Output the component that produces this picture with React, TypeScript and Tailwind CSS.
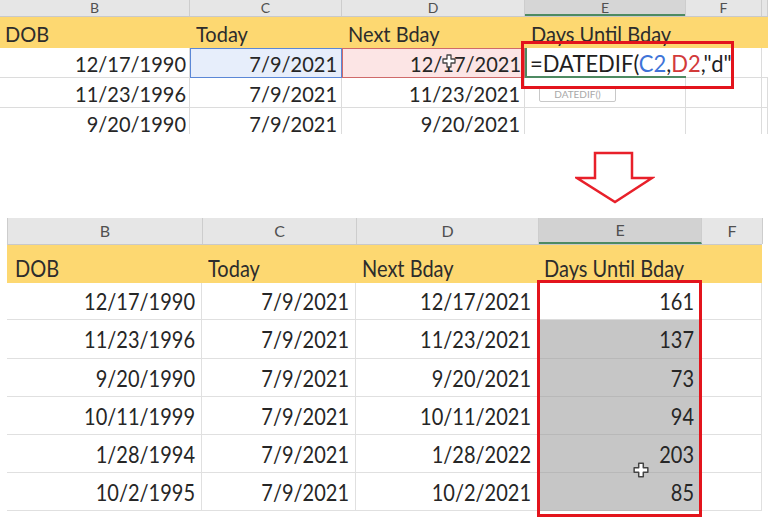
import React from "react";

const topW = ["w-[190px]", "w-[152px]", "w-[183px]", "w-[161px]", "w-[76px]", "w-[6px]"];
const botW = ["w-[195px]", "w-[154px]", "w-[182px]", "w-[163px]", "w-[61px]"];

function Cross({ size }: { size: number }) {
  return (
    <svg width={size} height={size} viewBox="0 0 14 14">
      <path
        d="M5 1h4v4h4v4h-4v4h-4v-4h-4v-4h4z"
        fill="#ffffff"
        stroke="#444"
        strokeWidth="1.3"
        strokeLinejoin="round"
      />
    </svg>
  );
}

function TopSection() {
  const letters = ["B", "C", "D", "E", "F", ""];
  const headers = ["DOB", "Today", "Next Bday", "Days Until Bday", "", ""];
  const rows = [
    ["11/23/1996", "7/9/2021", "11/23/2021"],
    ["9/20/1990", "7/9/2021", "9/20/2021"],
  ];
  return (
    <div className="relative h-[134px] overflow-hidden">
      <div className="flex h-[17px] bg-[#e6e6e6] border-b border-[#c9c9c9]">
        {letters.map((l, i) => (
          <div
            key={i}
            className={`${topW[i]} shrink-0 relative flex items-center justify-center border-r border-[#cdcdcd] text-[14px] leading-[14px] text-[#505050] ${
              i === 3 ? "bg-[#d6d6d6] text-[#2f6e45]" : ""
            }`}
          >
            {l}
            {i === 3 && <div className="absolute left-0 right-0 bottom-0 h-[2px] bg-[#4d8a62]" />}
          </div>
        ))}
      </div>
      <div className="flex h-[31px] bg-[#fdd871]">
        {headers.map((h, i) => (
          <div
            key={i}
            className={`${topW[i]} shrink-0 flex items-end ${i === 0 ? "pl-[5px]" : "pl-[6px]"} pb-[2px] text-[20px] leading-none text-[#2c2c2c] whitespace-nowrap`}
          >
            <span className="pb-[3px] scale-y-[1.08]">{h}</span>
          </div>
        ))}
      </div>
      {/* row 2 */}
      <div className="flex h-[30px]">
        <div className={`${topW[0]} shrink-0 flex items-center justify-end pr-[3px] border-r border-b border-[#dcdcdc] text-[20px] text-[#262626]`}>
          <span className="scale-y-[1.08]">12/17/1990</span>
        </div>
        <div className={`${topW[1]} shrink-0 flex items-center justify-end pr-[4px] border-[1.5px] border-[#5b87d6] bg-[#e7eefb] text-[20px] text-[#262626]`}>
          <span className="scale-y-[1.08]">7/9/2021</span>
        </div>
        <div className={`${topW[2]} shrink-0 flex items-center justify-end pr-[3px] border-[1.5px] border-[#cf6a6a] bg-[#fce5e5] text-[20px] text-[#262626]`}>
          <span className="scale-y-[1.08]">12/17/2021</span>
        </div>
        <div className={`${topW[3]} shrink-0 flex items-center pl-[3px] border-l-2 border-b-2 border-[#4d8a62] text-[22px] text-[#1f1f1f] whitespace-nowrap`}>
          <span className="scale-y-[1.08]">
            =DATEDIF(<span className="text-[#3f74d8]">C2</span>,<span className="text-[#d23a3a]">D2</span>,"d"
          </span>
        </div>
        <div className={`${topW[4]} shrink-0 border-r border-b border-[#dcdcdc]`} />
        <div className={`${topW[5]} shrink-0 border-b border-[#dcdcdc]`} />
      </div>
      {rows.map((r, ri) => (
        <div key={ri} className="flex h-[30px]">
          {[0, 1, 2, 3, 4, 5].map((i) => (
            <div
              key={i}
              className={`${topW[i]} shrink-0 flex items-center justify-end ${i === 0 ? "pr-[3px]" : "pr-[4px]"} border-r border-b border-[#dcdcdc] text-[20px] text-[#262626]`}
            >
              <span className="scale-y-[1.08]">{r[i] ?? ""}</span>
            </div>
          ))}
        </div>
      ))}
      {/* tooltip */}
      <div className="absolute left-[539px] top-[86px] w-[77px] h-[16px] border border-[#c8c8c8] bg-white rounded-[2px] flex items-center justify-center text-[10px] leading-none text-[#a9a9a9]">
        DATEDIF()
      </div>
      {/* red box */}
      <div className="absolute left-[521px] top-[41px] w-[213px] h-[48px] border-[3px] border-[#e3141c]" />
      {/* cursor */}
      <div className="absolute left-[442px] top-[54px]">
        <Cross size={14} />
      </div>
    </div>
  );
}

function Arrow() {
  return (
    <div className="h-[84px] pl-[575px] pt-[17px]">
      <svg width="80" height="54" viewBox="0 0 80 54">
        <polygon
          points="20,2 57,2 57,27 77,27 40,51 2,27 20,27"
          fill="#ffffff"
          stroke="#e8202a"
          strokeWidth="2.5"
          strokeLinejoin="miter"
        />
      </svg>
    </div>
  );
}

function BottomSection() {
  const letters = ["B", "C", "D", "E", "F"];
  const headers = ["DOB", "Today", "Next Bday", "Days Until Bday", ""];
  const rows = [
    ["12/17/1990", "7/9/2021", "12/17/2021", "161"],
    ["11/23/1996", "7/9/2021", "11/23/2021", "137"],
    ["9/20/1990", "7/9/2021", "9/20/2021", "73"],
    ["10/11/1999", "7/9/2021", "10/11/2021", "94"],
    ["1/28/1994", "7/9/2021", "1/28/2022", "203"],
    ["10/2/1995", "7/9/2021", "10/2/2021", "85"],
  ];
  const rowH = ["h-[37px]", "h-[39px]", "h-[38px]", "h-[38px]", "h-[38px]", "h-[38px]"];
  return (
    <div className="relative pl-[7px]">
      <div className="flex h-[27px] bg-[#e6e6e6] border-b border-[#c9c9c9] w-[755px] border-l border-l-[#cdcdcd]">
        {letters.map((l, i) => (
          <div
            key={i}
            className={`${botW[i]} shrink-0 flex items-center justify-center border-r border-[#cdcdcd] text-[16px] leading-none text-[#505050] ${
              i === 3 ? "bg-[#d2d2d2] border-b-2 border-b-[#4d8a62] text-[#4f6f5a]" : ""
            }`}
          >
            {l}
          </div>
        ))}
      </div>
      <div className="flex h-[38px] bg-[#fdd871] w-[755px]">
        {headers.map((h, i) => (
          <div
            key={i}
            className={`${botW[i]} shrink-0 flex items-end ${i === 0 ? "pl-[8px]" : "pl-[6px]"} pb-[5px] text-[20px] leading-none text-[#2c2c2c] whitespace-nowrap`}
          >
            <span className="scale-y-[1.15]">{h}</span>
          </div>
        ))}
      </div>
      {rows.map((r, ri) => (
        <div key={ri} className={`flex ${rowH[ri]}`}>
          {[0, 1, 2, 3, 4].map((i) => (
            <div
              key={i}
              className={`${botW[i]} shrink-0 flex items-center justify-end pr-[6px] border-r border-b text-[20px] text-[#262626] ${
                i === 3
                  ? ri === 0
                    ? "bg-white border-[#dcdcdc]"
                    : "bg-[#c6c6c6] border-[#b8b8b8]"
                  : "border-[#e0e0e0]"
              }`}
            >
              <span className="scale-y-[1.15]">{r[i] ?? ""}</span>
            </div>
          ))}
        </div>
      ))}
      {/* red box */}
      <div className="absolute left-[537px] top-[62px] w-[165px] h-[237px] border-[3px] border-[#e3141c]" />
      {/* cursor */}
      <div className="absolute left-[633px] top-[244px]">
        <Cross size={16} />
      </div>
    </div>
  );
}

export default function App() {
  return (
    <div className="w-[768px] h-[521px] overflow-hidden bg-white font-[family-name:Lato,sans-serif]">
      <TopSection />
      <Arrow />
      <BottomSection />
    </div>
  );
}
